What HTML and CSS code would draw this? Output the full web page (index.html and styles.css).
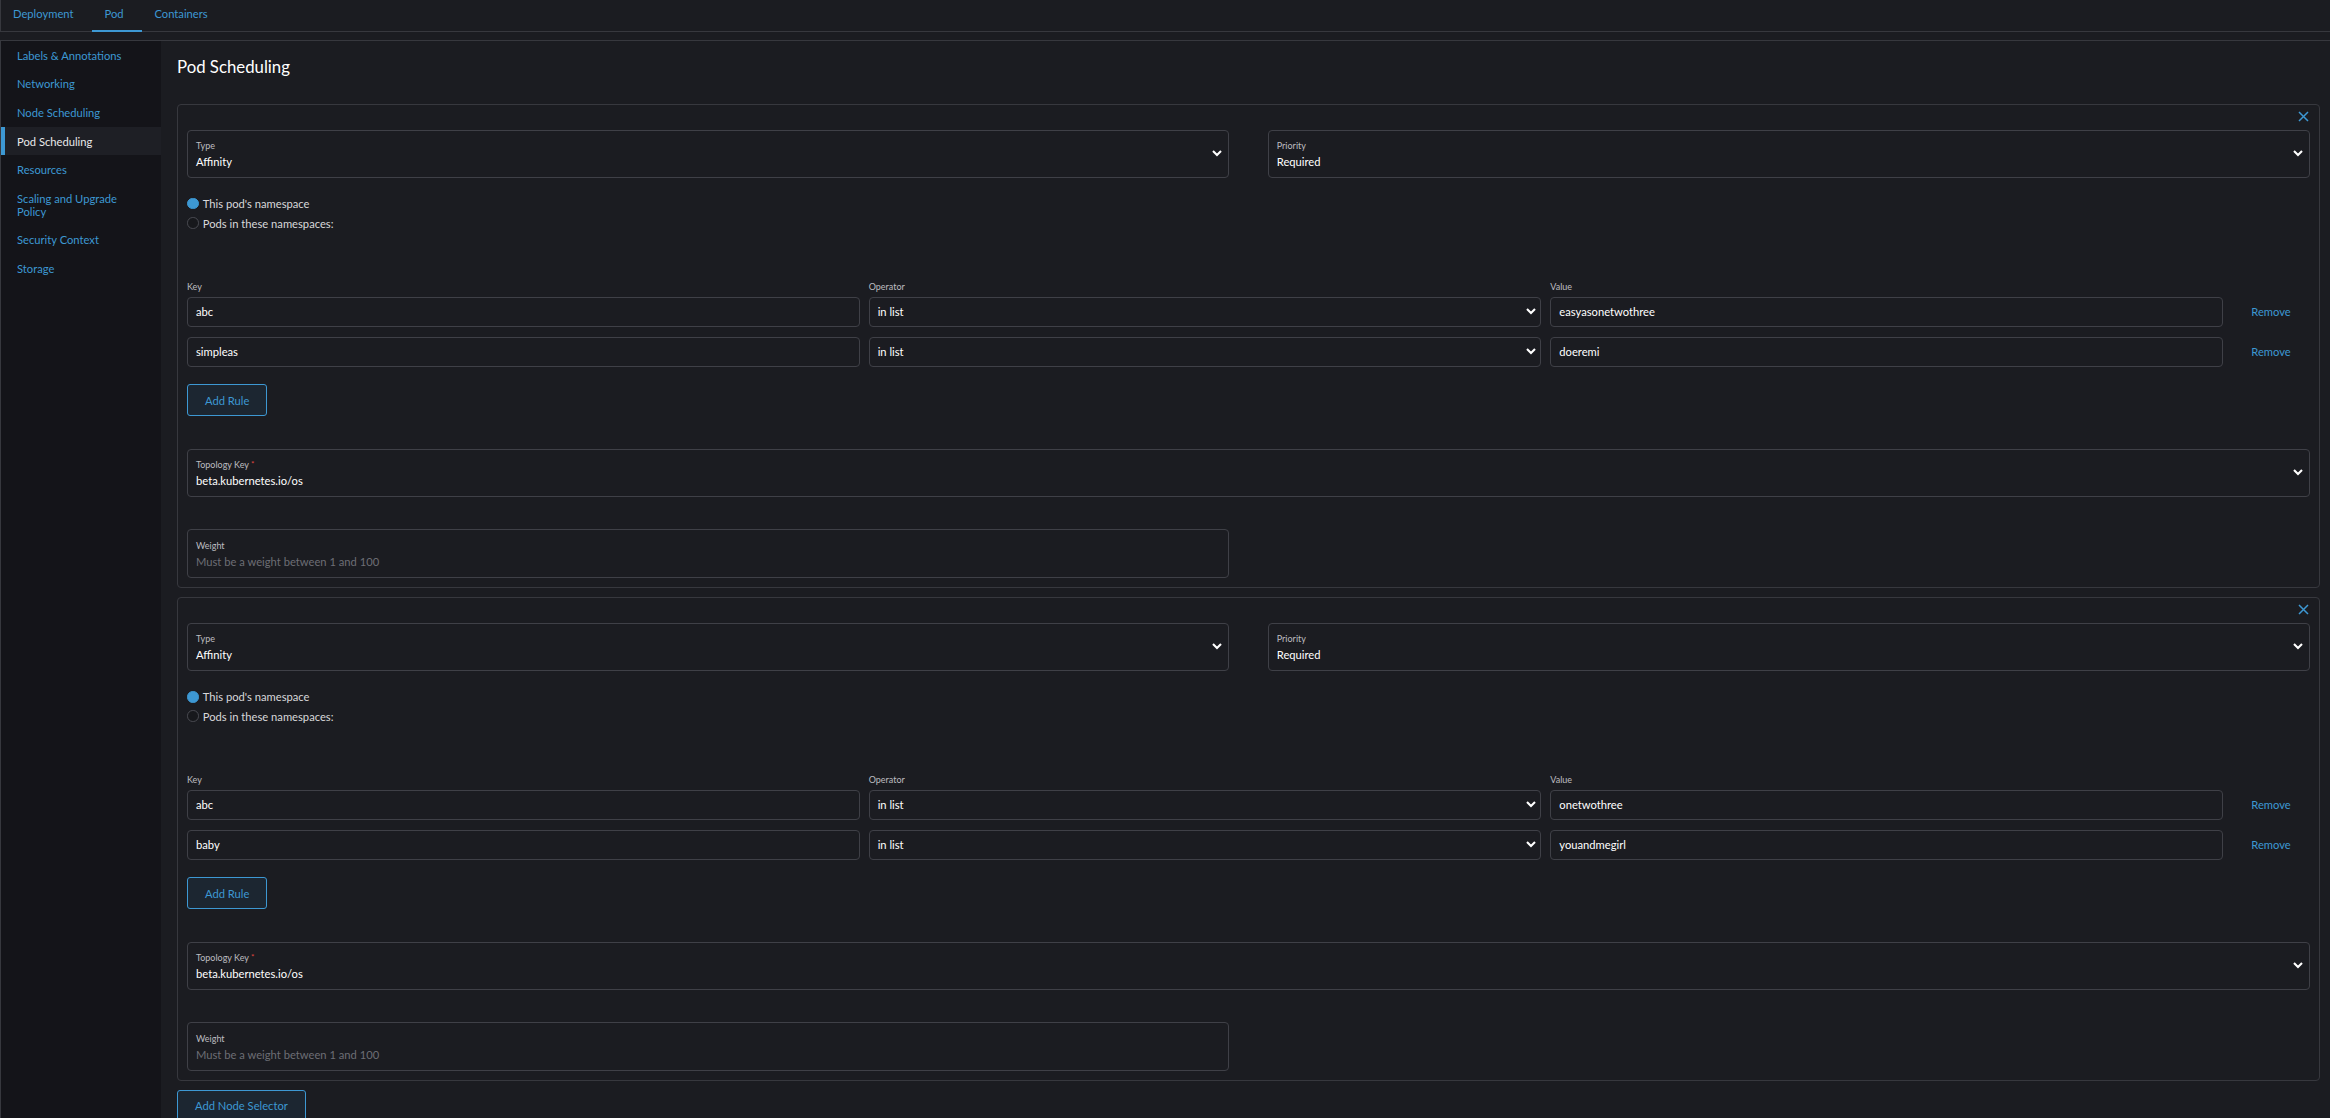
FILE: index.html
```html
<!DOCTYPE html>
<html lang="en">

<head>
    <meta charset="UTF-8">
    <meta name="viewport" content="width=device-width, initial-scale=1.0">
    <title>Pod Scheduling</title>
    <link rel="stylesheet" href="styles.css">
</head>

<body>
    <div class="tabs">
        <div class="tab">Deployment</div>
        <div class="tab active">Pod</div>
        <div class="tab">Containers</div>
    </div>

    <div class="layout">
        <div class="sidebar">
            <ul>
                <li>Labels &amp; Annotations</li>
                <li>Networking</li>
                <li>Node Scheduling</li>
                <li class="active">Pod Scheduling</li>
                <li>Resources</li>
                <li>Scaling and Upgrade Policy</li>
                <li>Security Context</li>
                <li>Storage</li>
            </ul>
        </div>

        <div class="content">
            <h3 class="title">Pod Scheduling</h3>

            <!-- term 1 -->
            <div class="card">
                <svg class="close" width="11" height="11" viewBox="0 0 11 11"><path d="M1 1L10 10M10 1L1 10" /></svg>
                <div class="row-2">
                    <div class="field">
                        <div class="field-text">
                            <div class="field-label">Type</div>
                            <div class="field-value">Affinity</div>
                        </div>
                        <svg class="chevron" width="10" height="7" viewBox="0 0 10 7"><polyline points="1,1 5,5 9,1" /></svg>
                    </div>
                    <div class="field">
                        <div class="field-text">
                            <div class="field-label">Priority</div>
                            <div class="field-value">Required</div>
                        </div>
                        <svg class="chevron" width="10" height="7" viewBox="0 0 10 7"><polyline points="1,1 5,5 9,1" /></svg>
                    </div>
                </div>

                <div class="radios">
                    <div class="radio"><span class="dot checked"></span>This pod's namespace</div>
                    <div class="radio"><span class="dot"></span>Pods in these namespaces:</div>
                </div>

                <div class="rules">
                    <div class="rule-grid rule-head">
                        <div>Key</div>
                        <div>Operator</div>
                        <div>Value</div>
                        <div></div>
                    </div>
                    <div class="rule-grid">
                        <div class="input">abc</div>
                        <div class="input select"><span>in list</span><svg class="chevron" width="10" height="7" viewBox="0 0 10 7"><polyline points="1,1 5,5 9,1" /></svg></div>
                        <div class="input">easyasonetwothree</div>
                        <div class="remove">Remove</div>
                    </div>
                    <div class="rule-grid">
                        <div class="input">simpleas</div>
                        <div class="input select"><span>in list</span><svg class="chevron" width="10" height="7" viewBox="0 0 10 7"><polyline points="1,1 5,5 9,1" /></svg></div>
                        <div class="input">doeremi</div>
                        <div class="remove">Remove</div>
                    </div>
                </div>

                <button class="btn add-rule">Add Rule</button>

                <div class="field topology">
                    <div class="field-text">
                        <div class="field-label">Topology Key <span class="required">*</span></div>
                        <div class="field-value">beta.kubernetes.io/os</div>
                    </div>
                    <svg class="chevron" width="10" height="7" viewBox="0 0 10 7"><polyline points="1,1 5,5 9,1" /></svg>
                </div>

                <div class="row-2 weight-row">
                    <div class="field">
                        <div class="field-text">
                            <div class="field-label">Weight</div>
                            <div class="field-value placeholder">Must be a weight between 1 and 100</div>
                        </div>
                    </div>
                </div>
            </div>

            <!-- term 2 -->
            <div class="card">
                <svg class="close" width="11" height="11" viewBox="0 0 11 11"><path d="M1 1L10 10M10 1L1 10" /></svg>
                <div class="row-2">
                    <div class="field">
                        <div class="field-text">
                            <div class="field-label">Type</div>
                            <div class="field-value">Affinity</div>
                        </div>
                        <svg class="chevron" width="10" height="7" viewBox="0 0 10 7"><polyline points="1,1 5,5 9,1" /></svg>
                    </div>
                    <div class="field">
                        <div class="field-text">
                            <div class="field-label">Priority</div>
                            <div class="field-value">Required</div>
                        </div>
                        <svg class="chevron" width="10" height="7" viewBox="0 0 10 7"><polyline points="1,1 5,5 9,1" /></svg>
                    </div>
                </div>

                <div class="radios">
                    <div class="radio"><span class="dot checked"></span>This pod's namespace</div>
                    <div class="radio"><span class="dot"></span>Pods in these namespaces:</div>
                </div>

                <div class="rules">
                    <div class="rule-grid rule-head">
                        <div>Key</div>
                        <div>Operator</div>
                        <div>Value</div>
                        <div></div>
                    </div>
                    <div class="rule-grid">
                        <div class="input">abc</div>
                        <div class="input select"><span>in list</span><svg class="chevron" width="10" height="7" viewBox="0 0 10 7"><polyline points="1,1 5,5 9,1" /></svg></div>
                        <div class="input">onetwothree</div>
                        <div class="remove">Remove</div>
                    </div>
                    <div class="rule-grid">
                        <div class="input">baby</div>
                        <div class="input select"><span>in list</span><svg class="chevron" width="10" height="7" viewBox="0 0 10 7"><polyline points="1,1 5,5 9,1" /></svg></div>
                        <div class="input">youandmegirl</div>
                        <div class="remove">Remove</div>
                    </div>
                </div>

                <button class="btn add-rule">Add Rule</button>

                <div class="field topology">
                    <div class="field-text">
                        <div class="field-label">Topology Key <span class="required">*</span></div>
                        <div class="field-value">beta.kubernetes.io/os</div>
                    </div>
                    <svg class="chevron" width="10" height="7" viewBox="0 0 10 7"><polyline points="1,1 5,5 9,1" /></svg>
                </div>

                <div class="row-2 weight-row">
                    <div class="field">
                        <div class="field-text">
                            <div class="field-label">Weight</div>
                            <div class="field-value placeholder">Must be a weight between 1 and 100</div>
                        </div>
                    </div>
                </div>
            </div>

            <button class="btn">Add Node Selector</button>
        </div>
    </div>
</body>

</html>
```

FILE: styles.css
```css
:root {
    --body-bg: #1b1c21;
    --nav-bg: #141419;
    --active-bg: #1e1f25;
    --border: #37383e;
    --input-border: #3f4047;
    --link: #3d98d3;
    --text: #e9e9ea;
    --label: #bdbdc0;
    --muted: #6d6e75;
}

body {
    margin: 0;
    height: 100vh;
    overflow: hidden;
    background-color: var(--body-bg);
    color: var(--text);
    font-family: Lato, "Noto Sans", sans-serif;
    font-size: 11.2px;
}

/* top tabs */
.tabs {
    display: flex;
    height: 31px;
    border-left: 1px solid var(--border);
    border-bottom: 1px solid var(--border);
}

.tab {
    padding: 0 12px 3px;
    line-height: 28px;
    color: var(--link);
    cursor: pointer;
}

.tab:first-child {
    margin-right: 7px;
}

.tab.active {
    min-width: 50px;
    box-sizing: border-box;
    padding-bottom: 1px;
    margin-bottom: -1px;
    border-bottom: 2px solid var(--link);
}

/* sidebar + content */
.layout {
    display: flex;
    margin-top: 8px;
    height: calc(100vh - 40px);
    border-top: 1px solid var(--border);
    border-left: 1px solid var(--border);
}

.sidebar {
    width: 160px;
    flex-shrink: 0;
    background-color: var(--nav-bg);
}

.sidebar ul {
    list-style: none;
    margin: 0;
    padding: 0;
}

.sidebar li {
    padding: 7.8px 26px 7.8px 16px;
    line-height: 13px;
    color: var(--link);
    cursor: pointer;
}

.sidebar li.active {
    background-color: var(--active-bg);
    box-shadow: inset 4px 0 0 var(--link);
    color: var(--text);
}

.content {
    flex: 1;
    padding: 15.7px 10px 0 16px;
}

.title {
    margin: 0 0 27px;
    font-size: 16.8px;
    font-weight: 400;
    line-height: 20px;
    color: #fff;
}

/* affinity term card */
.card {
    position: relative;
    margin-bottom: 9px;
    padding: 25px 9px 9px;
    border: 1px solid var(--border);
    border-radius: 4px;
}

.close {
    position: absolute;
    top: 6px;
    right: 10px;
    fill: none;
    stroke: var(--link);
    stroke-width: 1.5;
}

.row-2 {
    display: grid;
    grid-template-columns: 1fr 1fr;
    column-gap: 38.5px;
}

.field {
    display: flex;
    align-items: center;
    box-sizing: border-box;
    height: 48.4px;
    padding: 0 6px 0 8px;
    border: 1px solid var(--input-border);
    border-radius: 4px;
}

.field-text {
    flex: 1;
}

.field-label {
    font-size: 9px;
    line-height: 11px;
    color: var(--label);
}

.field-value {
    margin-top: 4px;
    line-height: 13px;
    color: #fff;
}

.field-value.placeholder {
    color: var(--muted);
}

.required {
    color: #e0463f;
    font-size: 8px;
    vertical-align: top;
}

.chevron {
    flex-shrink: 0;
    fill: none;
    stroke: #fff;
    stroke-width: 2.1;
}

.radios {
    margin-top: 16px;
}

.radio {
    display: flex;
    align-items: center;
    gap: 4.3px;
    height: 19.3px;
    color: #d8d8da;
}

.dot {
    width: 11.5px;
    height: 11.5px;
    box-sizing: border-box;
    border: 1px solid #4a4b52;
    border-radius: 50%;
    background-color: #17181c;
}

.dot.checked {
    border-color: var(--link);
    background-color: var(--link);
}

/* match expressions */
.rules {
    display: flex;
    flex-direction: column;
    gap: 10px;
    margin-top: 48px;
}

.rule-grid {
    display: grid;
    grid-template-columns: 1fr 1fr 1fr 78px;
    column-gap: 9px;
    align-items: center;
}

.rule-head {
    margin-bottom: -5px;
    font-size: 9px;
    line-height: 11px;
    color: var(--label);
}

.input {
    display: flex;
    align-items: center;
    box-sizing: border-box;
    height: 30px;
    padding: 0 8px;
    border: 1px solid var(--input-border);
    border-radius: 4px;
    color: #fff;
}

.input.select {
    justify-content: space-between;
    padding-right: 4px;
}

.remove {
    text-align: center;
    color: var(--link);
    cursor: pointer;
}

.btn {
    display: block;
    height: 32px;
    padding: 0 17px;
    border: 1px solid var(--link);
    border-radius: 3px;
    background-color: #1c2631;
    color: var(--link);
    font-family: inherit;
    font-size: 11.2px;
    cursor: pointer;
}

.add-rule {
    margin-top: 17.4px;
}

.topology {
    margin-top: 32.5px;
}

.weight-row {
    margin-top: 32.4px;
}
```
